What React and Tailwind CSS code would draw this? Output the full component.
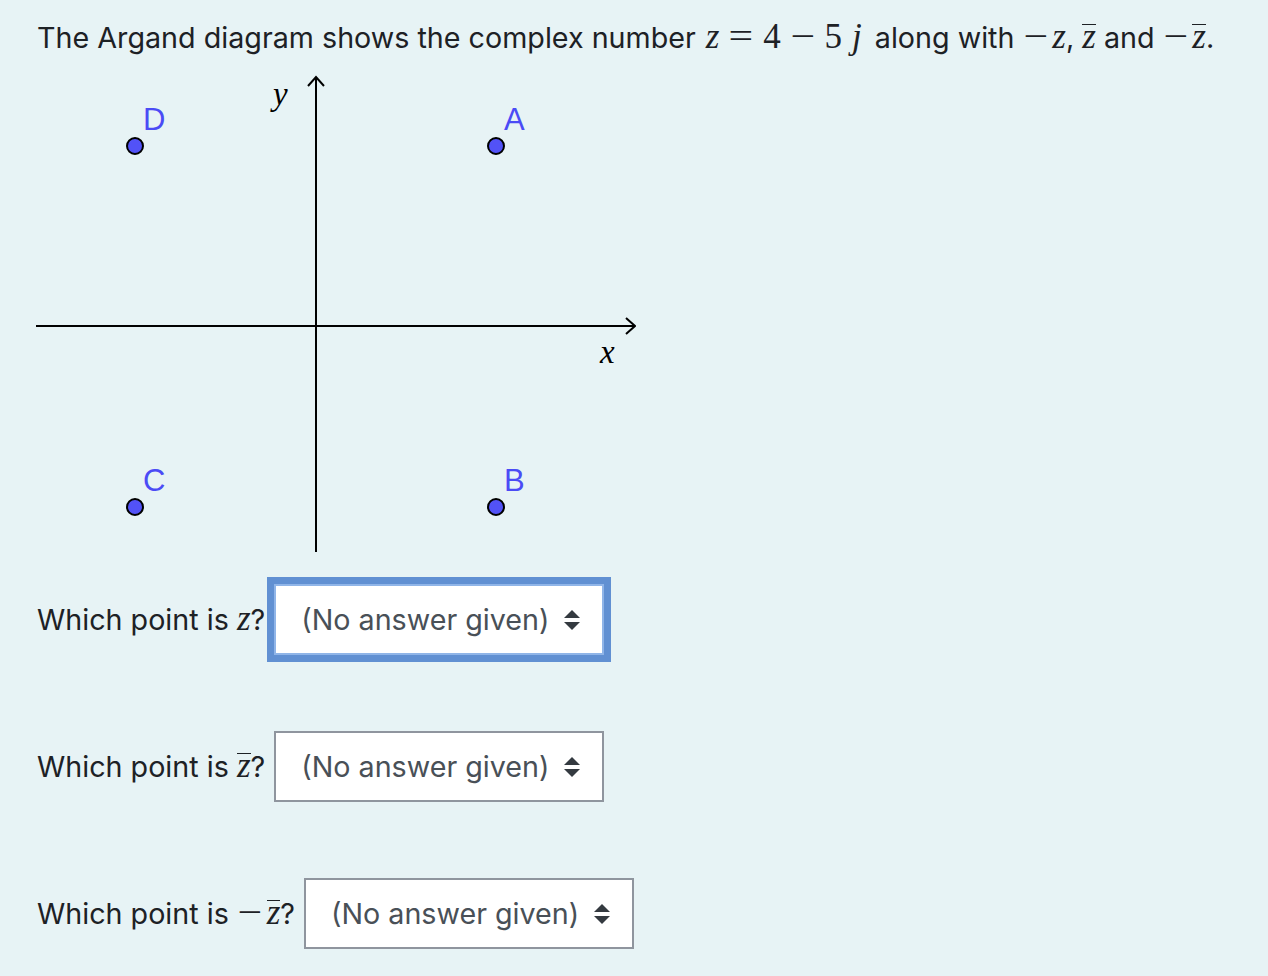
import React from 'react';

const points = [
  { name: 'D', x: 99, y: 72 },
  { name: 'A', x: 460, y: 72 },
  { name: 'C', x: 99, y: 433 },
  { name: 'B', x: 460, y: 433 },
];

const M = ({ children, className = '' }) => (
  <span className={`font-['Liberation_Serif',serif] italic text-[35px] leading-[30px] ${className}`}>{children}</span>
);
const R = ({ children, className = '' }) => (
  <span className={`font-['Liberation_Serif',serif] text-[35px] leading-[30px] ${className}`}>{children}</span>
);
// z with a bar over it
const ZBar = () => (
  <span className="inline-block border-t-[1.5px] border-current pt-[1px] font-['Liberation_Serif',serif] text-[35px] italic leading-[22px]">
    z
  </span>
);

const Diagram = () => (
  <svg width="600" height="478" viewBox="0 0 600 478" className="block">
    <line x1="0" y1="252" x2="599" y2="252" stroke="#000" strokeWidth="2" />
    <polyline points="590,244 599,252 590,260" fill="none" stroke="#000" strokeWidth="2" />
    <line x1="280" y1="478" x2="280" y2="3" stroke="#000" strokeWidth="2" />
    <polyline points="272,12 280,3 288,12" fill="none" stroke="#000" strokeWidth="2" />
    <text x="237" y="31" fontFamily="Liberation Serif, serif" fontStyle="italic" fontSize="33" fill="#000">y</text>
    <text x="564" y="289" fontFamily="Liberation Serif, serif" fontStyle="italic" fontSize="33" fill="#000">x</text>
    {points.map((p) => (
      <g key={p.name}>
        <circle cx={p.x} cy={p.y} r="8" fill="#5252f7" stroke="#000" strokeWidth="2" />
        <text x={p.x + 8} y={p.y - 16} fontFamily="Liberation Sans, Arial, sans-serif" fontSize="31" fill="#4b4bf5">
          {p.name}
        </text>
      </g>
    ))}
  </svg>
);

const Select = ({ focused }) => (
  <div
    className={`flex h-[71px] w-[330px] items-center justify-between bg-white pl-[25px] pr-[22px] text-[28.7px] text-[#495057] ${
      focused ? 'border-2 border-[#90b5e8] shadow-[0_0_0_7px_#6190d2]' : 'border-2 border-[#8f959e]'
    }`}
  >
    <span>(No answer given)</span>
    <svg width="16" height="22" viewBox="0 0 16 22">
      <polygon points="8,1 16,9 0,9" fill="#343a40" />
      <polygon points="0,13 16,13 8,21" fill="#343a40" />
    </svg>
  </div>
);

const Row = ({ label, focused }) => (
  <div className="flex items-center">
    <span className="mr-[9px] whitespace-nowrap">
      Which point is {label}?
    </span>
    <Select focused={focused} />
  </div>
);

const Minus = () => <R className="ml-[3px] mr-[7px] inline-block scale-x-125">−</R>;

export default function App() {
  return (
    <div className="min-h-[976px] bg-[#e7f3f5] pl-[37px] pt-[18px] font-['Inter',sans-serif] text-[28.7px] leading-[40px] text-[#1d2125]">
      <p className="whitespace-nowrap">
        The Argand diagram shows the complex number <M className="ml-[2px]">z</M>
        <R className="mx-[12px] inline-block scale-x-125">=</R>
        <R>4</R>
        <R className="mx-[12px] inline-block scale-x-125">−</R>
        <R>5</R>
        <M className="ml-[10px] mr-[5px]">j</M> along with <Minus />
        <M>z</M>, <ZBar /> and <Minus />
        <ZBar />.
      </p>

      <div className="-ml-[1px] mt-[16px]">
        <Diagram />
      </div>

      <div className="mt-[32px] flex flex-col gap-[76px]">
        <Row label={<M>z</M>} focused />
        <Row label={<ZBar />} />
        <Row label={<><Minus /><ZBar /></>} />
      </div>
    </div>
  );
}
